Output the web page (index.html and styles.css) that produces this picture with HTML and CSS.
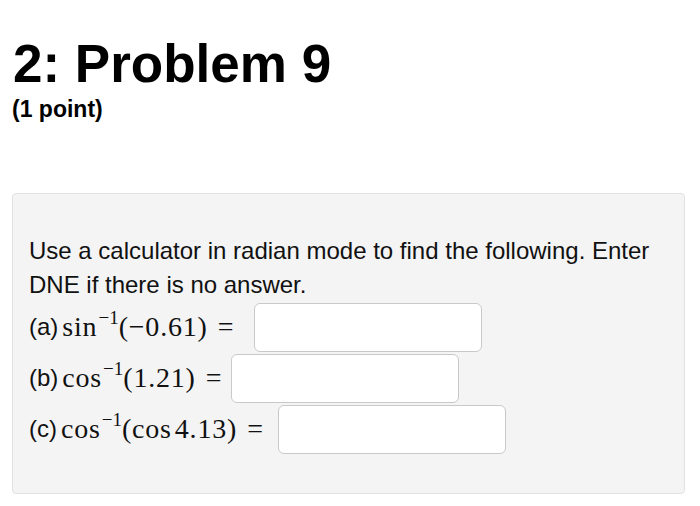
FILE: index.html
```html
<!DOCTYPE html>
<html lang="en">
<head>
<meta charset="utf-8">
<title>Problem 9</title>
<link rel="stylesheet" href="styles.css">
</head>
<body>
<div class="page">
  <h1 class="title">2: Problem 9</h1>
  <div class="points">(1 point)</div>
  <div class="problem">
    <p class="intro">Use a calculator in radian mode to find the following. Enter DNE if there is no answer.</p>
    <div class="row">
      <span class="label">(a)</span>
      <span class="math">sin<sup class="sup">−1</sup>(−0.61)<span class="eq">=</span></span>
      <span class="answer"></span>
    </div>
    <div class="row">
      <span class="label">(b)</span>
      <span class="math">cos<sup class="sup">−1</sup>(1.21)<span class="eq eq-tight">=</span></span>
      <span class="answer"></span>
    </div>
    <div class="row">
      <span class="label">(c)</span>
      <span class="math">cos<sup class="sup">−1</sup>(cos<span class="thin"></span>4.13)<span class="eq eq-mid">=</span></span>
      <span class="answer"></span>
    </div>
  </div>
</div>
</body>
</html>
```
FILE: styles.css
```css
html, body {
  margin: 0;
  padding: 0;
  background: #ffffff;
}

body {
  font-family: "Liberation Sans", Arial, Helvetica, sans-serif;
  color: #111111;
}

.page {
  width: 673px;
  padding: 33px 0 0 12px;
}

.title {
  margin: 0;
  font-size: 53px;
  font-weight: bold;
  line-height: 61px;
  color: #000;
  padding-left: 1px;
}

.points {
  margin-top: 3px;
  font-size: 23px;
  font-weight: bold;
  line-height: 25px;
  color: #000;
}

.problem {
  margin-top: 71px;
  background: #f4f4f4;
  border: 1px solid #e2e2e2;
  border-radius: 4px;
  padding: 40px 16px 39px 16px;
}

.intro {
  margin: 0;
  font-size: 24px;
  line-height: 34px;
  color: #111;
}

.row {
  display: flex;
  align-items: center;
  height: 50px;
  margin-top: 1px;
}

.row:first-of-type {
  margin-top: 0;
}

.label {
  font-size: 24px;
  margin-right: 4px;
}

.math {
  font-family: "Liberation Serif", "Times New Roman", serif;
  font-size: 28px;
  letter-spacing: 0.8px;
  color: #111;
  white-space: nowrap;
}

.sup {
  font-size: 19px;
  letter-spacing: 0;
  vertical-align: 0;
  position: relative;
  top: -12px;
  line-height: 0;
  margin-left: 1px;
}

.thin {
  display: inline-block;
  width: 3px;
}

.eq {
  margin: 0 20px 0 10px;
}

.eq-tight {
  margin-right: 9px;
}

.eq-mid {
  margin-right: 14px;
}

.answer {
  display: block;
  box-sizing: border-box;
  width: 228px;
  height: 49px;
  background: #ffffff;
  border: 1px solid #c9c9c9;
  border-radius: 6px;
}
```
